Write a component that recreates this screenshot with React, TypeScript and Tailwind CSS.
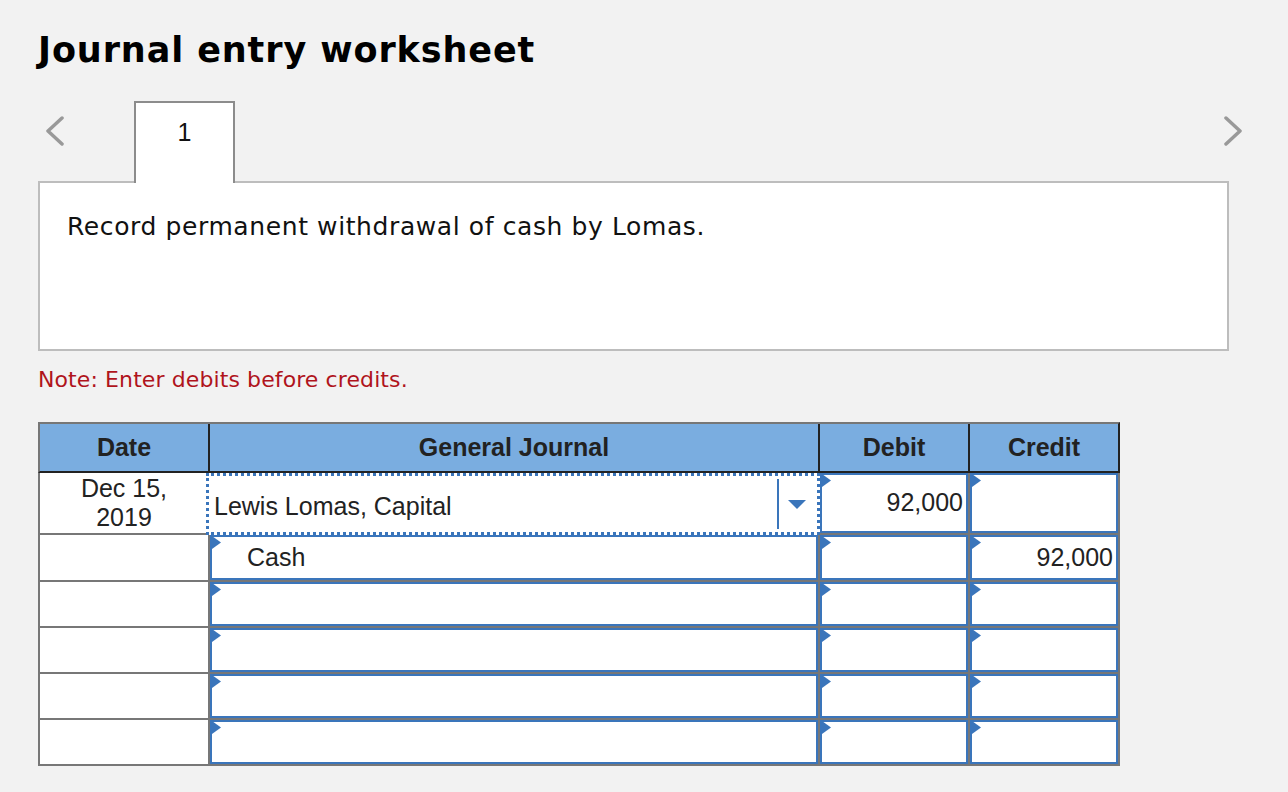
import React from "react";

const rows = [
  { date: ["Dec 15,", "2019"], account: "Lewis Lomas, Capital", debit: "92,000", credit: "", focus: true, h: "h-[60px]" },
  { date: [], account: "Cash", debit: "", credit: "92,000", indent: true, h: "h-[45px]" },
  { date: [], account: "", debit: "", credit: "", h: "h-[44px]" },
  { date: [], account: "", debit: "", credit: "", h: "h-[44px]" },
  { date: [], account: "", debit: "", credit: "", h: "h-[44px]" },
  { date: [], account: "", debit: "", credit: "", h: "h-[44px]" },
];

function Flag() {
  return (
    <svg className="absolute left-0 -top-px" width="9" height="13" viewBox="0 0 9 13">
      <polygon points="0,0 9,6.5 0,13" fill="#3a75bb" />
    </svg>
  );
}

function Chevron({ dir }: { dir: "left" | "right" }) {
  return (
    <svg width="18" height="30" viewBox="0 0 18 30">
      <polyline
        points={dir === "left" ? "16,2 2,15 16,28" : "2,2 16,15 2,28"}
        fill="none"
        stroke="#999999"
        strokeWidth="3.5"
        strokeLinecap="round"
        strokeLinejoin="round"
      />
    </svg>
  );
}

function InputCell({ children, right }: { children?: React.ReactNode; right?: boolean }) {
  return (
    <div
      className={`relative bg-white border-2 border-[#3a75bb] flex items-center ${right ? "justify-end pr-[3px]" : ""}`}
    >
      <Flag />
      {children}
    </div>
  );
}

export default function App() {
  return (
    <div className="min-h-screen bg-[#f2f2f2] pl-[38px] pt-[30px] pb-[30px] font-['DejaVu_Sans',Verdana,sans-serif]">
      <h1 className="text-[35px] leading-[40px] tracking-[0.9px] font-bold text-black">Journal entry worksheet</h1>

      <div className="flex items-start w-[1204px] mt-[31px] -mb-[2px]">
        <div className="w-[96px] pl-[8px] pt-[15px]">
          <Chevron dir="left" />
        </div>
        <div className="relative z-10 w-[101px] h-[82px] border-2 border-b-0 border-[#8c8c8c] bg-white pt-[14px] text-center font-['Liberation_Sans',Arial,sans-serif] text-[25px] leading-[30px] text-[#111]">
          1
        </div>
        <div className="flex-1" />
        <div className="w-[18px] pt-[15px]">
          <Chevron dir="right" />
        </div>
      </div>

      <div className="w-[1191px] h-[170px] border-2 border-[#bdbdbd] bg-white pl-[27px] pt-[29px]">
        <p className="text-[25px] leading-[30px] tracking-[0.6px] text-[#111]">Record permanent withdrawal of cash by Lomas.</p>
      </div>

      <p className="mt-[16px] text-[22px] leading-[26px] tracking-[0.1px] text-[#b0141c]">Note: Enter debits before credits.</p>

      <div className="mt-[29px] w-[1082px] font-['Liberation_Sans',Arial,sans-serif] text-[25px] text-[#222]">
        <div className="grid grid-cols-[168px_608px_148px_148px] gap-x-[2px] bg-[#222] border-2 border-t-[#777] border-l-[#777] border-r-[#222] border-b-[#222] h-[51px] font-bold">
          <div className="bg-[#7aade0] flex items-center justify-center">Date</div>
          <div className="bg-[#7aade0] flex items-center justify-center">General Journal</div>
          <div className="bg-[#7aade0] flex items-center justify-center">Debit</div>
          <div className="bg-[#7aade0] flex items-center justify-center">Credit</div>
        </div>

        <div className="grid grid-cols-[168px_608px_148px_148px] gap-[2px] bg-[#777] border-2 border-t-0 border-[#777]">
          {rows.map((r, i) => (
            <React.Fragment key={i}>
              <div className={`${r.h} bg-white flex flex-col items-center justify-center leading-[29px]`}>
                {r.date.map((d) => (
                  <span key={d}>{d}</span>
                ))}
              </div>
              {r.focus ? (
                <div className="relative z-10 -ml-[4px] -mr-[2px] -mb-[2px] bg-white flex items-center border-[3px] border-dotted border-[#3a75bb]">
                  <span className="flex-1 pl-[5px] pt-[5px]">{r.account}</span>
                  <div className="h-[50px] w-[2px] bg-[#3a75bb]" />
                  <svg className="mx-[9px]" width="18" height="9" viewBox="0 0 18 9">
                    <polygon points="0,0 18,0 9,9" fill="#3a75bb" />
                  </svg>
                  <div className="w-[2px]" />
                </div>
              ) : (
                <InputCell>
                  <span className={r.indent ? "pl-[35px]" : "pl-[4px]"}>{r.account}</span>
                </InputCell>
              )}
              <InputCell right>{r.debit}</InputCell>
              <InputCell right>{r.credit}</InputCell>
            </React.Fragment>
          ))}
        </div>
      </div>
    </div>
  );
}
